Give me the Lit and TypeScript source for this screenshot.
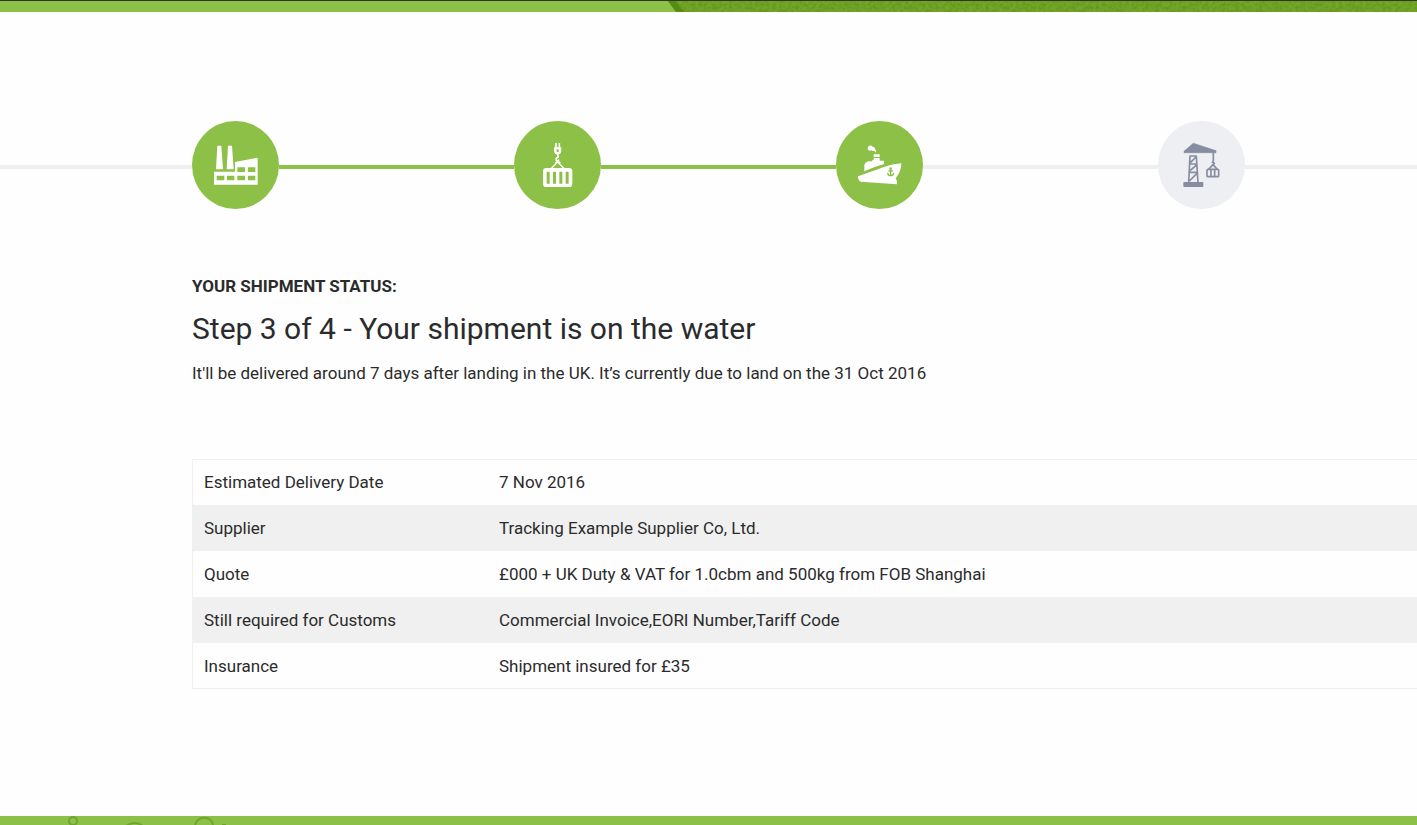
import { LitElement, html, css, svg } from "lit";
import { customElement, property } from "lit/decorators.js";
import { classMap } from "lit/directives/class-map.js";

const factory = svg`
  <path fill="currentColor" d="M97 92h12l5 71H93z M129 92h12l5 71h-21z"/>
  <path fill="currentColor" fill-rule="evenodd" d="M87 170H150V141L218 128V209H87z
    M95 182v14h23v-14z M126 182v14h22v-14z M157 182v14h23v-14z M189 182v14h22v-14z
    M157 157v14h23v-14z M189 157v14h22v-14z"/>`;

const container = svg`
  <g fill="none" stroke="currentColor" stroke-width="5" stroke-linecap="round" stroke-linejoin="round">
    <path stroke-linecap="butt" d="M147 84v14 M157 84v14"/>
    <path d="M152 118c0 5 3 4 1 9c-5 1-7 5-5 9c2 3 6 2 7-1"/>
    <path stroke-width="4" d="M132 161L152 141L172 161 M146 143l6-4l7 4"/>
  </g>
  <path fill="currentColor" fill-rule="evenodd" d="M141 97h22v9c0 8-4 13-11 13s-11-5-11-13z M149 103v8h6v-8z"/>
  <path fill="currentColor" fill-rule="evenodd" d="M118 159H186a10 10 0 0 1 10 10V206a10 10 0 0 1-10 10H118a10 10 0 0 1-10-10V169a10 10 0 0 1 10-10z
    M119 170v36h9v-36z M138 170v36h9v-36z M157 170v36h9v-36z M176 170v36h9v-36z"/>`;

const ship = svg`
  <path fill="currentColor" d="M116 100c0-9 12-11 15-4c4-1 7 2 7 6c3 3 4 6 3 12c-2-4-4-6-8-6c-2 0-4-1-5-2c-5 3-12 0-12-6z"/>
  <path fill="currentColor" d="M134 118h18v8h-18z M134 129h18v8h13v10l-28 9l-31 13v-16c0-8 5-12 12-14h12v-4h4z"/>
  <path fill="currentColor" d="M87 184l51-18c24-9 48-18 79-21c-1 22-8 34-17 44l4 10v9l-109-8c-6-3-8-8-8-16z"/>
  <g fill="none" class="anchor" stroke-width="4" stroke-linecap="round">
    <circle cx="185" cy="161" r="2"/>
    <path d="M185 164v18 M180 168h10 M176 175c1 5 4 7 9 7s8-2 9-7"/>
  </g>`;

const crane = svg`
  <path fill="currentColor" stroke="currentColor" stroke-width="2" stroke-linejoin="round" d="M99 109L127 85L195 107V113H99z"/>
  <rect fill="currentColor" x="97" y="201" width="60" height="15" rx="3"/>
  <g fill="none" stroke="currentColor" stroke-width="5" stroke-linejoin="round">
    <path d="M113 203L117 123H136L141 203 M116 147H138 M114 172H140 M118 143L135 126 M117 167L137 150 M115 198L138 175"/>
    <path d="M187 112V140 M182 141l8 4l-5 7 M173 163L186 149L199 163"/>
    <rect x="168" y="163" width="35" height="22" rx="3"/>
    <path d="M180 163v22 M191 163v22"/>
  </g>`;

const STEPS = [
  { name: "Factory", icon: factory },
  { name: "Loading", icon: container },
  { name: "On the water", icon: ship },
  { name: "Landed", icon: crane },
];

const DETAILS = [
  ["Estimated Delivery Date", "7 Nov 2016"],
  ["Supplier", "Tracking Example Supplier Co, Ltd."],
  ["Quote", "£000 + UK Duty & VAT for 1.0cbm and 500kg from FOB Shanghai"],
  ["Still required for Customs", "Commercial Invoice,EORI Number,Tariff Code"],
  ["Insurance", "Shipment insured for £35"],
];

@customElement("shipment-steps")
export class ShipmentSteps extends LitElement {
  @property({ type: Number }) current = 1;

  static styles = css`
    :host { display: block; }
    .track { display: flex; align-items: center; margin: 0; padding: 0; list-style: none; }
    .lead { flex: none; width: 192px; height: 4px; margin-top: 4px; background: #efeff1; }
    .step { display: flex; align-items: center; flex: 322 1 0; }
    .step.last { flex-grow: 259; }
    .disc { flex: none; display: block; width: 87px; height: 88px; border-radius: 50%; background: #eeeff3; color: #878da1; }
    .done .disc { background: #8dc046; color: #fff; }
    .line { flex: 1; height: 4px; margin-top: 4px; background: #efeff1; }
    .line.active { background: #8dc046; }
    .anchor { stroke: #8dc046; }
  `;

  render() {
    return html`<ol class="track">
      <li class="lead" role="presentation"></li>
      ${STEPS.map((step, i) => html`
        <li class=${classMap({ step: true, done: i < this.current, last: i === STEPS.length - 1 })}>
          <svg class="disc" viewBox="21 18 261 264" role="img" aria-label=${step.name}>${step.icon}</svg>
          <span class=${classMap({ line: true, active: i < this.current - 1 })}></span>
        </li>`)}
    </ol>`;
  }
}

@customElement("app-root")
export class AppRoot extends LitElement {
  static styles = css`
    :host {
      display: flex; flex-direction: column; min-height: 100vh; overflow: hidden;
      background: #fefefe; color: #2b2b2c;
      font: 17px/24px Roboto, "Liberation Sans", sans-serif;
    }
    .banner { display: block; flex: none; width: 100%; height: 12px; }
    main { flex: 1; padding-top: 109px; }
    .content { padding-left: 192px; }
    .status { padding-top: 65px; }
    h2 { margin: 0; font-size: 17px; line-height: 24px; font-weight: 700; }
    h1 { margin: 11px 0 12px; font-size: 30px; line-height: 40px; font-weight: 400; }
    p { margin: 0; }
    table { width: calc(100% + 1px); margin-top: 74px; border-spacing: 0; outline: 1px solid #f0f0f0; outline-offset: -1px; }
    th, td { padding: 11px 12px; text-align: left; font-weight: 400; }
    th { width: 271px; }
    tr:nth-child(even) { background: #f0f0f0; }
    footer { flex: none; height: 9px; background: #8dc046; }
    .doodles { display: block; width: 260px; height: 9px; }
  `;

  render() {
    return html`
      <svg class="banner" aria-hidden="true">
        <defs>
          <filter id="grain" x="0" y="0" width="100%" height="100%" color-interpolation-filters="sRGB">
            <feTurbulence type="fractalNoise" baseFrequency="0.3" numOctaves="2"/>
            <feColorMatrix values="0 0 0 0 0.35  0 0 0 0 0.52  0 0 0 0 0.06  1 0 0 0 -0.3"/>
            <feComposite in2="SourceGraphic" operator="in" result="noise"/>
            <feMerge><feMergeNode in="SourceGraphic"/><feMergeNode in="noise"/></feMerge>
          </filter>
        </defs>
        <rect width="100%" height="12" fill="#8dc046"/>
        <svg x="47%" width="53%" height="12">
          <rect x="10" width="100%" height="12" fill="#73a829" filter="url(#grain)"/>
          <path fill="#8dc046" d="M0 0h6l8 12H0z"/>
          <path fill="#558c12" d="M1 0h8l9 12h-8z"/>
        </svg>
        <rect width="100%" height="1" fill="#303431"/>
      </svg>
      <main>
        <shipment-steps .current=${3}></shipment-steps>
        <div class="content">
          <section class="status">
            <h2>YOUR SHIPMENT STATUS:</h2>
            <h1>Step 3 of 4 - Your shipment is on the water</h1>
            <p>It'll be delivered around 7 days after landing in the UK. It’s currently due to land on the 31 Oct 2016</p>
          </section>
          <table>
            <tbody>
              ${DETAILS.map(([label, value]) => html`<tr><th scope="row">${label}</th><td>${value}</td></tr>`)}
            </tbody>
          </table>
        </div>
      </main>
      <footer>
        <svg class="doodles" viewBox="0 0 260 9" fill="none" stroke="#74a331" stroke-width="2" aria-hidden="true">
          <circle cx="73" cy="5" r="4"/><path d="M72 9h3"/>
          <path d="M126 10q9-6 17 0 M195 10c1-11 18-11 18 0 M222 9h4"/>
        </svg>
      </footer>`;
  }
}
